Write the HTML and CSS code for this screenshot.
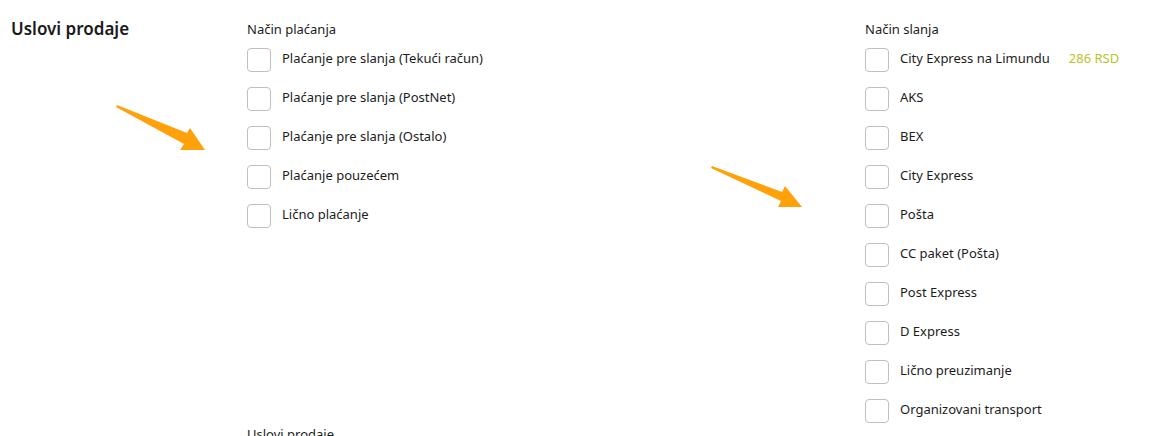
FILE: index.html
```html
<!DOCTYPE html>
<html lang="sr">
<head>
    <meta charset="UTF-8">
    <title>Uslovi prodaje</title>
    <link rel="stylesheet" href="styles.css">
</head>
<body>
<div class="section">
    <h2 class="sectionTitle">Uslovi prodaje</h2>
    <div class="fields">
        <div class="columns">
            <div class="group">
                <p class="groupLabel">Način plaćanja</p>
                <ul class="options">
                    <li><span class="box"></span>Plaćanje pre slanja (Tekući račun)</li>
                    <li><span class="box"></span>Plaćanje pre slanja (PostNet)</li>
                    <li><span class="box"></span>Plaćanje pre slanja (Ostalo)</li>
                    <li><span class="box"></span>Plaćanje pouzećem</li>
                    <li><span class="box"></span>Lično plaćanje</li>
                </ul>
            </div>
            <div class="group">
                <p class="groupLabel">Način slanja</p>
                <ul class="options">
                    <li><span class="box"></span>City Express na Limundu <span class="price">286 RSD</span></li>
                    <li><span class="box"></span>AKS</li>
                    <li><span class="box"></span>BEX</li>
                    <li><span class="box"></span>City Express</li>
                    <li><span class="box"></span>Pošta</li>
                    <li><span class="box"></span>CC paket (Pošta)</li>
                    <li><span class="box"></span>Post Express</li>
                    <li><span class="box"></span>D Express</li>
                    <li><span class="box"></span>Lično preuzimanje</li>
                    <li><span class="box"></span>Organizovani transport</li>
                </ul>
            </div>
        </div>
        <p class="groupLabel">Uslovi prodaje</p>
    </div>
</div>

<!-- strelice (anotacija preko sadržaja) -->
<svg class="arrow arrowLeft" width="92" height="48" viewBox="0 0 92 48">
    <polygon points="1,0 71,28 74,23 89,45 64,45 68,39 0,2"/>
</svg>
<svg class="arrow arrowRight" width="92" height="48" viewBox="0 0 92 48">
    <polygon points="1,0 71,26 74,20 91,41 67,41 70,35 0,2"/>
</svg>
</body>
</html>
```

FILE: styles.css
```css
body {
    font-family: 'Noto Sans', 'Open Sans', sans-serif;
    margin: 0;
    padding: 0;
    background-color: #fff;
    color: #1c1c1c;
    font-size: 13px;
}

.section {
    display: flex;
    padding-top: 18px;
}

.sectionTitle {
    width: 236px;
    padding-left: 11px;
    margin: 0;
    font-size: 17px;
    font-weight: 600;
    line-height: 22px;
    color: #1a1a1a;
}

.fields {
    flex: 1;
}

.columns {
    display: grid;
    grid-template-columns: 618px auto;
}

.groupLabel {
    margin: 2px 0 10px 0;
    line-height: 18px;
}

.options {
    list-style-type: none;
    padding: 0;
    margin: 0;
    display: flex;
    flex-direction: column;
    gap: 15px;
}

.options li {
    display: flex;
    align-items: flex-start;
    height: 24px;
    line-height: 20px;
}

.box {
    width: 22px;
    height: 22px;
    border: 1px solid #bcc0c5;
    border-radius: 4px;
    margin-right: 11px;
    flex-shrink: 0;
}

.price {
    color: #b8c42b;
    margin-left: 19px;
}

.arrow {
    position: absolute;
    fill: #ffa10a;
}

.arrowLeft {
    left: 116px;
    top: 105px;
}

.arrowRight {
    left: 711px;
    top: 166px;
}
```
